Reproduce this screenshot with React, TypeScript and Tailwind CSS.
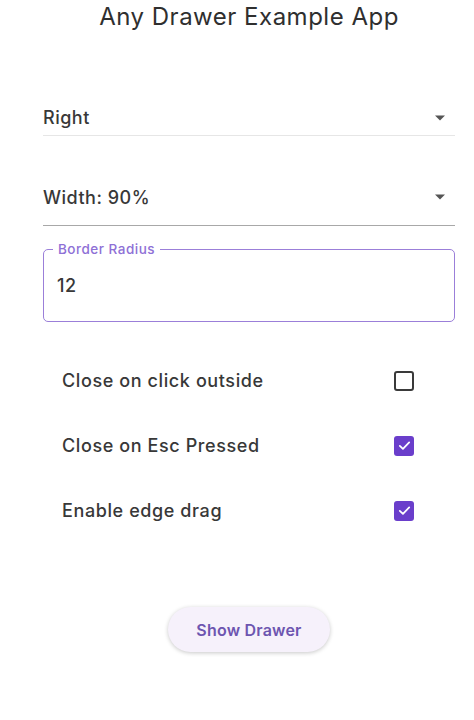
import React from "react";

function Caret() {
  return (
    <svg width="10" height="6" viewBox="0 0 10 5" className="shrink-0">
      <path d="M0 0 L10 0 L5 5 Z" fill="#555555" />
    </svg>
  );
}

function Box({ checked }: { checked: boolean }) {
  if (checked) {
    return (
      <div className="w-[20px] h-[20px] rounded-[3px] bg-[#6a3ecb] flex items-center justify-center">
        <svg width="15" height="15" viewBox="0 0 24 24">
          <path d="M4.5 12.5 L9.5 17.5 L19.5 7" fill="none" stroke="white" strokeWidth="2.8" strokeLinecap="round" strokeLinejoin="round" />
        </svg>
      </div>
    );
  }
  return <div className="w-[20px] h-[20px] rounded-[3px] border-2 border-[#3a3a3a]" />;
}

export default function App() {
  const rows = [
    { label: "Close on click outside", checked: false },
    { label: "Close on Esc Pressed", checked: true },
    { label: "Enable edge drag", checked: true },
  ];
  return (
    <div className="w-[474px] h-[720px] bg-white overflow-hidden text-[#383838]" style={{ fontFamily: "Inter, 'Noto Sans', sans-serif" }}>
      <div className="h-[34px] flex items-center justify-center pl-[24px] text-[24px] text-[#2f2f2f] tracking-[0.5px]">
        Any Drawer Example App
      </div>
      <div className="ml-[43px] w-[412px] flex flex-col">
        <div className="mt-[66px] h-[36px] flex items-center justify-between border-b border-[#e6e6e6] pr-[10px]">
          <span className="text-[18px] font-medium tracking-[0.5px]">Right</span>
          <Caret />
        </div>
        <div className="mt-[44px] h-[46px] pb-[11px] flex items-center justify-between border-b-[1.5px] border-[#a8a8a8] pr-[10px]">
          <span className="text-[18px] font-medium tracking-[0.5px]">Width: 90%</span>
          <Caret />
        </div>
        <div className="relative mt-[23px] h-[73px] rounded-[5px] border-[1.5px] border-[#9b7fd9] flex items-center pl-[13px]">
          <span className="absolute left-[9px] top-[-10px] px-[5px] bg-white text-[13.5px] leading-[18px] font-medium text-[#8e70d6] tracking-[0.5px]">
            Border Radius
          </span>
          <span className="text-[18px] font-medium tracking-[0.5px]">12</span>
        </div>
        <div className="mt-[26px] flex flex-col">
          {rows.map((r) => (
            <div key={r.label} className="h-[65px] flex items-center justify-between pl-[19px] pr-[41px]">
              <span className="text-[18px] font-medium tracking-[0.6px]">{r.label}</span>
              <Box checked={r.checked} />
            </div>
          ))}
        </div>
        <div className="mt-[64px] flex justify-center">
          <button className="w-[162px] h-[45px] rounded-full bg-[#f6f1fb] text-[#6d55b0] text-[16px] font-semibold tracking-[0.2px] shadow-[0_1px_4px_rgba(0,0,0,0.22)]">
            Show Drawer
          </button>
        </div>
      </div>
    </div>
  );
}
